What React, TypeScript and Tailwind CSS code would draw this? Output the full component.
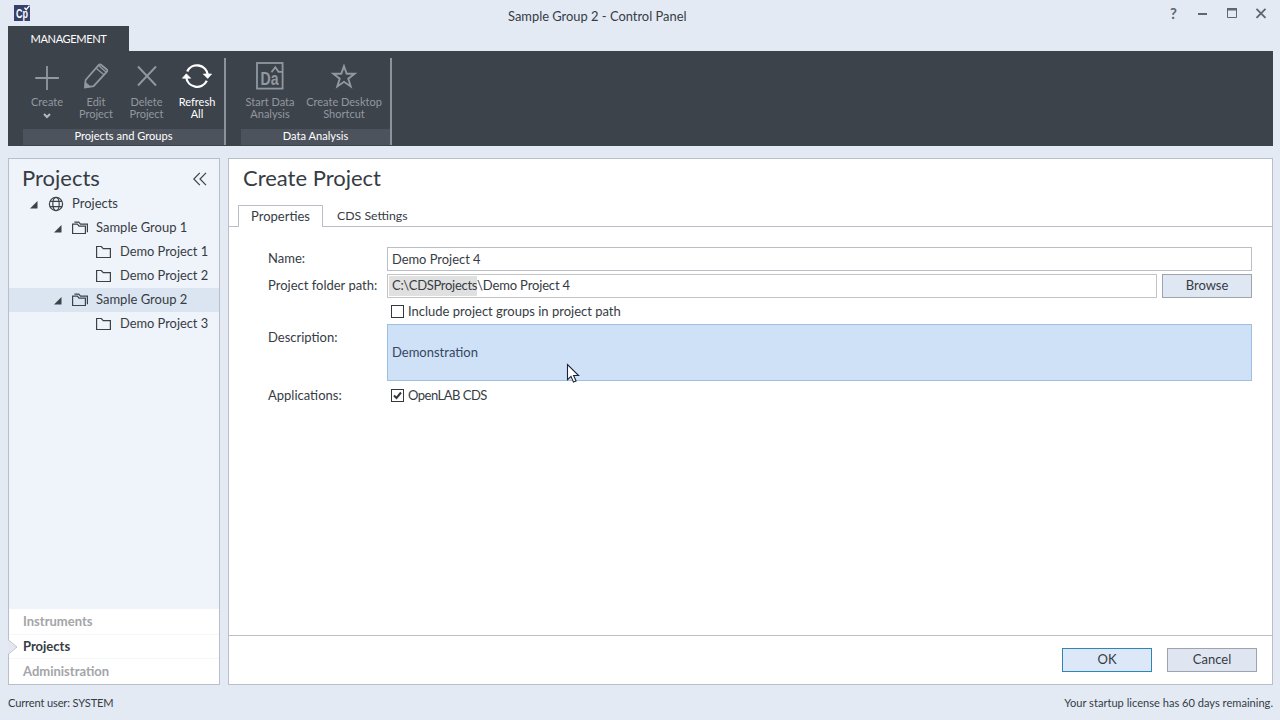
import type { ReactNode } from "react";
import clsx from "clsx";

const PlusIcon = () => (
  <svg width="28" height="28" viewBox="0 0 28 28" stroke="currentColor" strokeWidth="1.8">
    <path d="M14 4v24M2.3 16h23.6" />
  </svg>
);

const PencilIcon = () => (
  <svg width="28" height="28" viewBox="0 0 28 28" fill="none" stroke="currentColor" strokeWidth="1.8">
    <path d="M3 25.5l.6-7.5L16.6 3.2c.8-.9 1.8-.9 2.7-.2l5.2 4.2c.9.8 1 1.8.2 2.7L11.6 24.2 3 25.5z" />
    <path d="M14.2 6.2l7.8 6.6M16.8 3.8l7.2 6.2" strokeWidth="1.4" />
    <path d="M3 25.5l.3-5.2 5 4.3z" fill="currentColor" strokeWidth="1" />
  </svg>
);

const DeleteIcon = () => (
  <svg width="28" height="28" viewBox="0 0 28 28" stroke="currentColor" strokeWidth="1.9">
    <path d="M5 4.5l18 19M23 4.5l-18 19" />
  </svg>
);

const RefreshIcon = () => (
  <svg width="30" height="28" viewBox="0 0 30 28" fill="none" stroke="currentColor" strokeWidth="2.3">
    <path d="M5.2 9.4A10.9 10.9 0 0 1 25.8 13M24.8 18.8A10.9 10.9 0 0 1 4.2 15" />
    <path d="M.4 16.2l3.9-4.4 4.4 4.4zM21.3 12l4.4 4.4 3.9-4.4z" fill="currentColor" strokeWidth="0.7" />
  </svg>
);

const DataAnalysisIcon = () => (
  <svg width="28" height="28" viewBox="0 0 28 28" fill="none" stroke="currentColor" strokeWidth="1.8">
    <rect x="1" y="1" width="25.6" height="25.6" />
    <path d="M15.5 10.2l3.8-5 3.2 4.6h4" />
    <text x="4.6" y="23" className="font-['Liberation_Sans'] text-[18px] font-bold" fill="currentColor" stroke="none" textLength="18" lengthAdjust="spacingAndGlyphs">
      Da
    </text>
  </svg>
);

const StarIcon = () => (
  <svg width="28" height="28" viewBox="0 0 28 28" fill="none" stroke="currentColor" strokeWidth="1.9">
    <path d="M14 4.2l2.7 7.6h7.9l-6.3 4.9 2.4 7.8-6.7-4.7-6.7 4.7 2.4-7.8-6.3-4.9h7.9z" />
  </svg>
);

const GlobeIcon = () => (
  <svg width="16" height="16" viewBox="0 0 16 16" fill="none" stroke="#3c4249" strokeWidth="1.2">
    <circle cx="8" cy="8" r="6.6" />
    <ellipse cx="8" cy="8" rx="3.2" ry="6.6" />
    <path d="M2.2 5.3h11.6M2.2 10.7h11.6" />
  </svg>
);

const FolderIcon = () => (
  <svg width="17" height="14" viewBox="0 0 17 14" fill="none" stroke="#3c4249" strokeWidth="1.2">
    <path d="M.6 12.5v-11h4.8l1.8 2.2h7.2v8.8z" />
  </svg>
);

const FoldersIcon = () => (
  <svg width="17" height="14" viewBox="0 0 17 14" fill="none" stroke="#3c4249" strokeWidth="1.2">
    <path d="M.6 12.5v-9.4h4.8l1.6 2h6.4v7.4z" />
    <path d="M2.4 1.2h4.4l1.7 1.9h6.9v8.2" />
  </svg>
);

type RibbonButtonProps = {
  icon: ReactNode;
  lines: string[];
  className: string;
  active?: boolean;
  dropdown?: boolean;
};

const RibbonButton = ({ icon, lines, className, active, dropdown }: RibbonButtonProps) => (
  <button
    className={clsx(
      "flex shrink-0 flex-col items-center text-[11px] leading-[12px] whitespace-nowrap",
      active ? "text-white" : "text-[#9298a0]",
      className,
    )}
  >
    <span className="mb-[6px] flex h-7 items-center">{icon}</span>
    {lines.map((line) => (
      <span key={line}>{line}</span>
    ))}
    {dropdown && (
      <svg width="8" height="6" viewBox="0 0 8 6" className="mt-[5px]" fill="none" stroke="#b4b9bf" strokeWidth="2">
        <path d="M1 1l3 3 3-3" />
      </svg>
    )}
  </button>
);

type TreeItem = { label: string; depth: number; selected?: boolean };

const tree: TreeItem[] = [
  { label: "Projects", depth: 0 },
  { label: "Sample Group 1", depth: 1 },
  { label: "Demo Project 1", depth: 2 },
  { label: "Demo Project 2", depth: 2 },
  { label: "Sample Group 2", depth: 1, selected: true },
  { label: "Demo Project 3", depth: 2 },
];

const indents = ["pl-[20px]", "pl-[44px]", "pl-[87px] text-[12.85px]"];

const TreeRow = ({ label, depth, selected }: TreeItem) => (
  <li className={clsx("flex h-6 items-center whitespace-nowrap", indents[depth], selected && "bg-[#dbe5f1]")}>
    {depth < 2 && (
      <svg width="8" height="8" viewBox="0 0 8 8" className="mt-[2px] mr-[10px] ml-[1px] shrink-0" fill="#3c4249">
        <path d="M7.5 0v7.5H0z" />
      </svg>
    )}
    <span className="flex w-6 shrink-0">
      {depth === 0 ? <GlobeIcon /> : depth === 1 ? <FoldersIcon /> : <FolderIcon />}
    </span>
    <span>{label}</span>
  </li>
);

const TitleBar = () => (
  <header className="flex h-[26px] shrink-0 items-start">
    <div className="w-[508px] pt-[5px] pl-[14px]">
      <svg width="16" height="16" viewBox="0 0 16 16" className="overflow-visible">
        <path fill="#35416b" d="M0 0h16v16H0z" />
        <text x="2" y="12.7" fill="#fff" className="font-['Liberation_Sans'] text-[12.5px] font-bold" textLength="12" lengthAdjust="spacingAndGlyphs">
          Cp
        </text>
        <path d="M10.5 2.6l1.6 2L15.5.6" fill="none" stroke="#fff" strokeWidth="1.4" />
      </svg>
    </div>
    <h1 className="pt-[7px] text-[12.9px] leading-[18px] whitespace-nowrap">Sample Group 2 - Control Panel</h1>
    <div className="mt-[6px] mr-[13px] ml-auto flex h-[14px] items-center text-[#60656e]">
      <span className="mr-[21px] text-[15px] leading-[14px] font-bold">?</span>
      <svg width="69" height="14" viewBox="0 0 69 14" fill="none" stroke="currentColor">
        <path d="M0 8h9" strokeWidth="2" />
        <path d="M29.5 2.5h9v9h-9z" strokeWidth="1" />
        <path d="M29 3.3h10" strokeWidth="2.4" />
        <path d="M58.5 2.8l9 9M67.5 2.8l-9 9" strokeWidth="1.9" />
      </svg>
    </div>
  </header>
);

const Ribbon = () => (
  <div className="mx-2 mr-[7px] shrink-0">
    <div className="flex h-[25px] w-[121px] items-center justify-center bg-[#3d434b] pt-[2px] text-[11.1px] tracking-[-0.4px] text-white">
      MANAGEMENT
    </div>
    <div className="flex h-[95px] bg-[#3d434b] pt-[7px] pl-[15px]">
      <section className="flex h-[87px] w-[203px] flex-col border-r-2 border-[#8d939a]">
        <div className="flex pt-[4px]">
          <RibbonButton icon={<PlusIcon />} lines={["Create"]} className="w-[48px]" dropdown />
          <RibbonButton icon={<PencilIcon />} lines={["Edit", "Project"]} className="w-[50px]" />
          <RibbonButton icon={<DeleteIcon />} lines={["Delete", "Project"]} className="w-[51px]" />
          <RibbonButton icon={<RefreshIcon />} lines={["Refresh", "All"]} className="w-[50px]" active />
        </div>
        <h2 className="mt-auto h-[16px] bg-[#4d535c] text-center text-[11.1px] leading-[14px] text-white">
          Projects and Groups
        </h2>
      </section>
      <section className="ml-[15px] flex h-[87px] w-[151px] flex-col border-r-2 border-[#8d939a]">
        <div className="flex pt-[4px]">
          <RibbonButton icon={<DataAnalysisIcon />} lines={["Start Data", "Analysis"]} className="w-[58px]" />
          <RibbonButton icon={<StarIcon />} lines={["Create Desktop", "Shortcut"]} className="w-[90px]" />
        </div>
        <h2 className="mt-auto h-[16px] bg-[#4d535c] text-center text-[11.1px] leading-[14px] text-white">
          Data Analysis
        </h2>
      </section>
    </div>
  </div>
);

const Sidebar = () => (
  <aside className="flex w-[212px] shrink-0 flex-col border border-[#b9bfc9] bg-[#eff3fa]">
    <div className="flex h-[33px] items-center justify-between pt-[6px] pr-[12px] pl-[13px]">
      <h2 className="-mt-[2px] text-[22px] leading-6">Projects</h2>
      <svg width="14" height="14" viewBox="0 0 14 14" fill="none" stroke="#3c4249" strokeWidth="1.2">
        <path d="M6.8.8L.8 7l6 6.2M13 .8L7 7l6 6.2" />
      </svg>
    </div>
    <ul>
      {tree.map((item) => (
        <TreeRow key={item.label} {...item} />
      ))}
    </ul>
    <nav className="relative mt-auto flex h-[75px] flex-col bg-white font-bold">
      <a className="flex h-[25px] items-center pl-[14px] text-[#a3a5a8]">Instruments</a>
      <a className="flex h-[25px] items-center border-y border-[#f5f6f8] pl-[14px]">Projects</a>
      <a className="flex h-[25px] items-center pl-[14px] text-[#a3a5a8]">Administration</a>
      <svg width="10" height="16" viewBox="0 0 10 16" className="absolute top-[30px] -left-px">
        <path d="M0 .5L9 8l-9 7.5" fill="#e4e7ed" stroke="#c4c6ca" />
      </svg>
    </nav>
  </aside>
);

const Checkbox = ({ label, checked, className }: { label: string; checked?: boolean; className?: string }) => (
  <label className="ml-1 flex items-center whitespace-nowrap">
    <span className="mr-[4px] flex size-[13px] items-center justify-center border border-[#33383f] bg-white">
      {checked && (
        <svg width="9" height="9" viewBox="0 0 9 9" fill="none" stroke="#33383f" strokeWidth="2">
          <path d="M1 4.5l2.5 2.5L8 1.5" />
        </svg>
      )}
    </span>
    <span className={className}>{label}</span>
  </label>
);

const CreateProject = () => (
  <main className="flex flex-1 flex-col border border-[#b9bfc9] bg-white">
    <h2 className="h-[46px] pt-[7px] pl-[14px] text-[22px] leading-6">Create Project</h2>
    <div className="flex h-[22px] border-b border-[#b9bfc9] pl-[9px]">
      <div className="h-[22px] w-[85px] border border-b-0 border-[#b9bfc9] bg-white text-center leading-[21px]">
        Properties
      </div>
      <div className="pl-[14px] text-[12.3px] leading-[21px]">CDS Settings</div>
    </div>
    <form className="grid grid-cols-[119px_1fr] pt-[20px] pr-[20px] pl-[39px]">
      <label className="leading-[22px]">Name:</label>
      <div className="h-[24px] border border-[#b9bfc4] pl-[4px] text-[12.9px] leading-[23px]">Demo Project 4</div>

      <label className="mt-[3px] leading-[22px]">Project folder path:</label>
      <div className="mt-[3px] flex gap-[5px]">
        <div className="flex h-[24px] flex-1 border border-[#c3c5c4] p-px leading-[19px]">
          <span className="h-[20px] bg-[#e0e0e0] pl-[3px] tracking-[-0.3px]">C:\CDSProjects</span>
          <span className="tracking-[-0.15px]">\Demo Project 4</span>
        </div>
        <button type="button" className="h-[24px] w-[90px] border border-[#9ea4ae] bg-[#dfe7f3]">
          Browse
        </button>
      </div>

      <div className="col-start-2 flex h-[26px]">
        <Checkbox label="Include project groups in project path" className="pt-px" />
      </div>

      <label className="pt-[2px] leading-[22px]">Description:</label>
      <div className="h-[57px] border border-[#9dbfe2] bg-[#cfe1f7] pl-[4px] leading-[55px] text-[#33475f]">
        Demonstration
      </div>

      <label className="mt-[3px] leading-[22px]">Applications:</label>
      <div className="mt-[2px] flex h-[24px]">
        <Checkbox label="OpenLAB CDS" className="pt-[2px] tracking-[-0.5px]" checked />
      </div>
    </form>
    <div className="mt-auto flex h-[49px] justify-end gap-[15px] border-t border-[#b9bfc4] pt-[12px] pr-[15px]">
      <button className="h-[24px] w-[90px] border border-[#2e86b4] bg-[#dce7f7]">OK</button>
      <button className="h-[24px] w-[90px] border border-[#9ea4ae] bg-[#dfe6f2]">Cancel</button>
    </div>
  </main>
);

const App = () => (
  <div className="relative flex h-[720px] w-[1280px] flex-col overflow-hidden bg-[#e3eaf4] font-[Lato,'Liberation_Sans',sans-serif] text-[13px] text-[#363c44]">
    <TitleBar />
    <Ribbon />
    <div className="mt-3 mr-[7px] ml-2 flex h-[527px] gap-2">
      <Sidebar />
      <CreateProject />
    </div>
    <footer className="mr-[7px] ml-2 flex h-[35px] items-center justify-between pt-[2px] text-[11.1px]">
      <span className="tracking-[-0.15px]">Current user: SYSTEM</span>
      <span>Your startup license has 60 days remaining.</span>
    </footer>
    <svg width="14" height="21" viewBox="0 0 14 21" className="absolute top-[363px] left-[566px]">
      <path d="M1.5 1.5v15.2l3.5-3.3 2.5 5.7 2.6-1.1-2.5-5.5h5z" fill="#fff" stroke="#1d2433" strokeWidth="1.1" />
    </svg>
  </div>
);

export default App;
